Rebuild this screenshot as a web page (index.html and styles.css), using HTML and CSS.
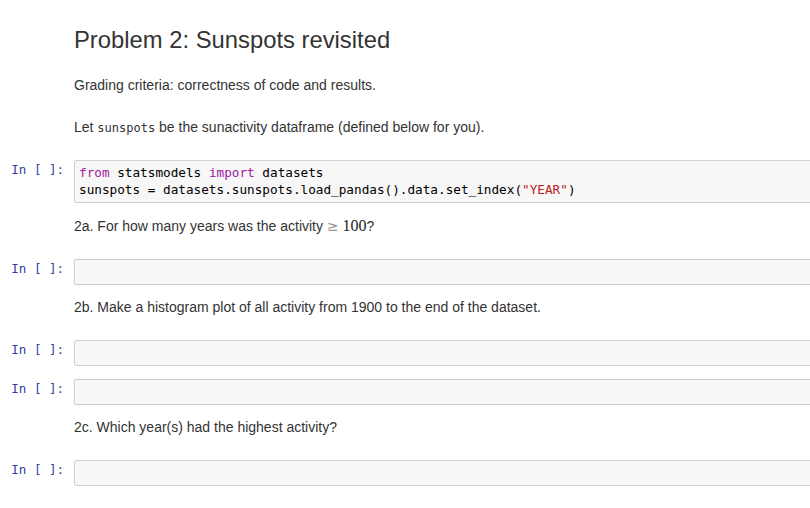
FILE: index.html
```html
<!DOCTYPE html>
<html>
<head>
<meta charset="utf-8">
<link rel="stylesheet" href="styles.css">
</head>
<body>
<div class="notebook">
  <div class="cell text-cell">
    <div class="prompt"></div>
    <div class="md">
      <h2 class="title">Problem 2: Sunspots revisited</h2>
      <p class="para grading">Grading criteria: correctness of code and results.</p>
      <p class="para let">Let <code class="inline">sunspots</code> be the sunactivity dataframe (defined below for you).</p>
    </div>
  </div>

  <div class="cell code-cell first-code">
    <div class="prompt">In&nbsp;[&nbsp;]:</div>
    <div class="input-area">
      <div class="code-line"><span class="kw">from</span> statsmodels <span class="kw">import</span> datasets</div>
      <div class="code-line">sunspots = datasets.sunspots.load_pandas().data.set_index(<span class="str">"YEAR"</span>)</div>
    </div>
  </div>

  <div class="cell text-cell q">
    <div class="prompt"></div>
    <div class="md"><p class="para">2a. For how many years was the activity <span class="math"><span class="geq">≥</span> 100</span>?</p></div>
  </div>

  <div class="cell code-cell">
    <div class="prompt">In&nbsp;[&nbsp;]:</div>
    <div class="input-area"><div class="code-line"> </div></div>
  </div>

  <div class="cell text-cell q">
    <div class="prompt"></div>
    <div class="md"><p class="para">2b. Make a histogram plot of all activity from 1900 to the end of the dataset.</p></div>
  </div>

  <div class="cell code-cell">
    <div class="prompt">In&nbsp;[&nbsp;]:</div>
    <div class="input-area"><div class="code-line"> </div></div>
  </div>

  <div class="cell code-cell tight">
    <div class="prompt">In&nbsp;[&nbsp;]:</div>
    <div class="input-area"><div class="code-line"> </div></div>
  </div>

  <div class="cell text-cell q">
    <div class="prompt"></div>
    <div class="md"><p class="para">2c. Which year(s) had the highest activity?</p></div>
  </div>

  <div class="cell code-cell">
    <div class="prompt">In&nbsp;[&nbsp;]:</div>
    <div class="input-area"><div class="code-line"> </div></div>
  </div>
</div>
</body>
</html>
```

FILE: styles.css
```css
html, body {
  margin: 0;
  padding: 0;
  background: #ffffff;
  overflow: hidden;
}

body {
  width: 810px;
  height: 508px;
  font-family: "Liberation Sans", Arial, sans-serif;
  color: #333333;
}

.notebook {
  width: 900px;
  display: flex;
  flex-direction: column;
}

.cell {
  display: flex;
  flex-direction: row;
  align-items: flex-start;
}

.prompt {
  width: 64px;
  flex: 0 0 64px;
  padding-right: 10px;
  text-align: right;
  font-family: "DejaVu Sans Mono", monospace;
  font-size: 12.5px;
  line-height: 17px;
  color: #303f9f;
  white-space: nowrap;
}

.code-cell .prompt {
  padding-top: 1px;
  box-sizing: content-box;
}

.md {
  flex: 1;
}

.title {
  margin: 26px 0 0 0;
  font-size: 23.8px;
  font-weight: normal;
  line-height: 28px;
  color: #333333;
}

.para {
  margin: 0;
  font-size: 14px;
  line-height: 17px;
  color: #333333;
}

.grading {
  margin-top: 23px;
}

.let {
  margin-top: 25px;
}

.inline {
  font-family: "DejaVu Sans Mono", monospace;
  font-size: 12px;
  color: #333333;
}

.math {
  font-family: "Liberation Serif", "DejaVu Serif", serif;
  font-size: 16px;
  color: #222222;
}

.geq {
  color: #999999;
  font-family: "DejaVu Sans", sans-serif;
  font-size: 14px;
}

.input-area {
  flex: 1;
  border: 1px solid #cfcfcf;
  border-radius: 2px;
  background: #f7f7f7;
  padding: 4px 4px;
}

.code-line {
  white-space: pre;
  font-family: "DejaVu Sans Mono", monospace;
  font-size: 12.7px;
  line-height: 16.5px;
  height: 16.5px;
  color: #000000;
}

.kw {
  color: #a020a0;
}

.str {
  color: #ba2121;
}

.first-code {
  margin-top: 23px;
}

.q {
  margin-top: 14px;
}

.q + .code-cell {
  margin-top: 23.5px;
}

.tight {
  margin-top: 12.5px;
}
```
